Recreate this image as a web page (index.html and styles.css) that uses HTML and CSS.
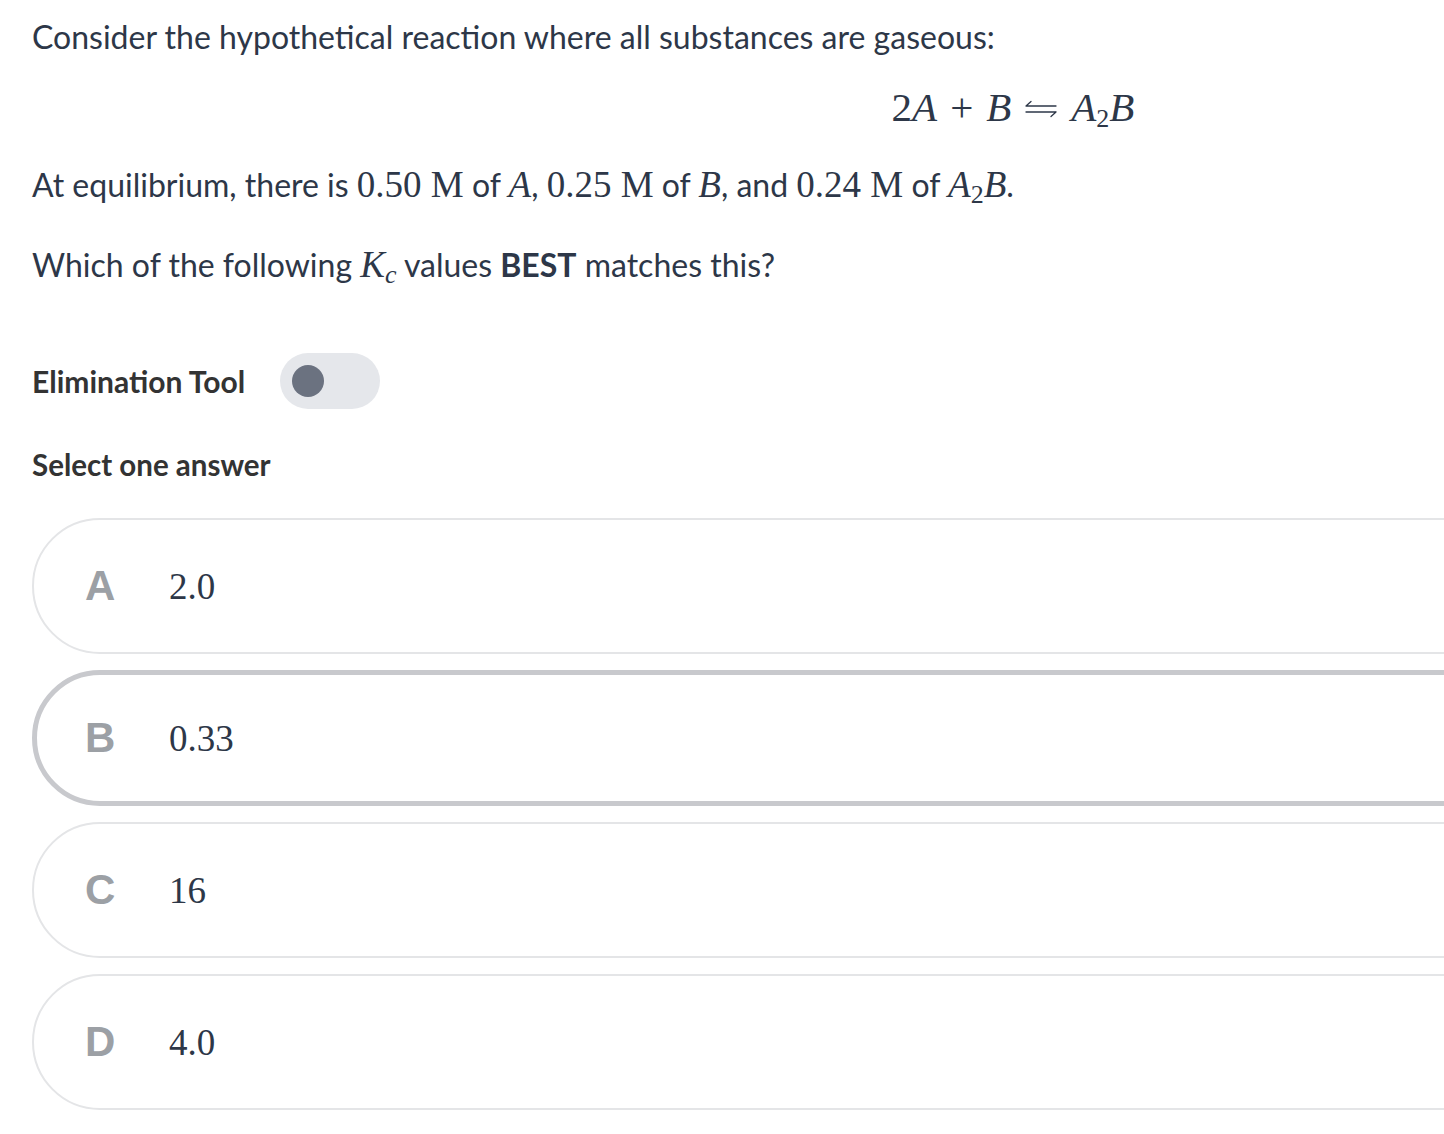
FILE: index.html
```html
<!DOCTYPE html>
<html lang="en">
<head>
<meta charset="utf-8">
<title>Question</title>
<link rel="stylesheet" href="styles.css">
</head>
<body>
<div class="page">
  <p class="para first">Consider the hypothetical reaction where all substances are gaseous:</p>
  <div class="display">
    <span class="math"><span class="mn">2</span><span class="mi">A</span><span class="mo">+</span><span class="mi">B</span><svg class="harp" viewBox="0 0 32 18" width="32" height="18" aria-hidden="true"><path d="M1 6 H31 M1 6 L6 1.5 M31 12 H1 M31 12 L26 16.5" fill="none" stroke="#2d3748" stroke-width="1.3" stroke-linecap="round"/></svg><span class="mi">A</span><sub class="sub">2</sub><span class="mi">B</span></span>
  </div>
  <p class="para">At equilibrium, there is <span class="math">0.50 M</span> of <span class="math"><span class="mi">A</span></span>, <span class="math">0.25 M</span> of <span class="math"><span class="mi">B</span></span>, and <span class="math">0.24 M</span> of <span class="math"><span class="mi">A</span><sub class="sub">2</sub><span class="mi">B</span></span>.</p>
  <p class="para">Which of the following <span class="math"><span class="mi">K</span><sub class="sub subi">c</sub></span> values <strong>BEST</strong> matches this?</p>

  <div class="tool-row">
    <span class="tool-label">Elimination Tool</span>
    <span class="toggle"><span class="knob"></span></span>
  </div>

  <div class="select-label">Select one answer</div>

  <div class="options">
    <div class="option"><span class="letter">A</span><span class="value">2.0</span></div>
    <div class="option selected"><span class="letter">B</span><span class="value">0.33</span></div>
    <div class="option"><span class="letter">C</span><span class="value">16</span></div>
    <div class="option"><span class="letter">D</span><span class="value">4.0</span></div>
  </div>
</div>
</body>
</html>
```

FILE: styles.css
```css
html, body {
  margin: 0;
  padding: 0;
  overflow: hidden;
  background: #ffffff;
}

body {
  font-family: Lato, "Liberation Sans", sans-serif;
  color: #2d3748;
}

.page {
  width: 1962px;
  padding: 15px 0 0 32px;
}

.para {
  margin: 0;
  font-size: 32px;
  line-height: 44px;
}

.first {
  margin-bottom: 34px;
}

.display {
  text-align: center;
  height: 44px;
  line-height: 44px;
  margin-bottom: 26px;
}

.display + .para {
  margin-bottom: 36px;
}

.math {
  font-family: "Liberation Serif", "Times New Roman", serif;
  font-size: 37px;
  line-height: 0;
  white-space: nowrap;
}

.display .math {
  font-size: 41px;
}

.mi {
  font-style: italic;
}

.mo {
  margin: 0 13px;
}

.harp {
  margin: 0 14px;
  vertical-align: 3px;
}

.sub {
  font-size: 26px;
  vertical-align: -6px;
  line-height: 0;
}

.subi {
  font-style: italic;
}

strong {
  font-weight: 700;
}

.tool-row {
  display: flex;
  align-items: center;
  margin-top: 66px;
  gap: 35px;
}

.tool-label {
  font-size: 30px;
  font-weight: 700;
  color: #333333;
}

.toggle {
  display: flex;
  align-items: center;
  width: 100px;
  height: 56px;
  border-radius: 28px;
  background: #e5e7eb;
  padding-left: 12px;
  box-sizing: border-box;
}

.knob {
  width: 32px;
  height: 32px;
  border-radius: 50%;
  background: #6b7280;
}

.select-label {
  margin-top: 38px;
  font-size: 29.5px;
  line-height: 36px;
  font-weight: 700;
  color: #333333;
}

.options {
  display: flex;
  flex-direction: column;
  gap: 16px;
  margin-top: 35px;
}

.option {
  box-sizing: border-box;
  height: 136px;
  border: 2px solid #e4e5e7;
  border-radius: 68px;
  display: flex;
  align-items: center;
  padding-left: 51px;
}

.option.selected {
  border: 5px solid #c8c9cd;
  padding-left: 48px;
}

.letter {
  width: 84px;
  font-family: "Liberation Sans", Arial, sans-serif;
  font-weight: 700;
  font-size: 42px;
  color: #9ca0a5;
}

.value {
  font-family: "Liberation Serif", "Times New Roman", serif;
  font-size: 37px;
  color: #2d3748;
}
```
